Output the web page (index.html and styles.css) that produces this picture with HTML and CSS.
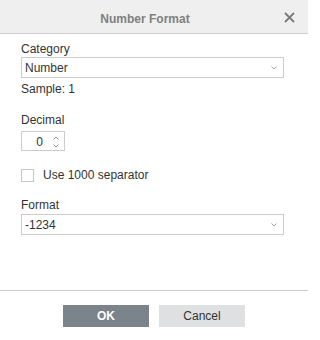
FILE: index.html
```html
<!DOCTYPE html>
<html>
<head>
<meta charset="utf-8">
<link rel="stylesheet" href="styles.css">
</head>
<body>
<div class="dialog">
  <div class="header">
    <span class="title">Number Format</span>
    <svg class="close" width="11" height="11" viewBox="0 0 11 11"><path d="M1 1 L10 10 M10 1 L1 10" stroke="#7a7a7a" stroke-width="1.8" fill="none"/></svg>
  </div>
  <div class="content">
    <div class="label label-category">Category</div>
    <div class="select">
      <span>Number</span>
      <svg class="caret" width="6" height="4" viewBox="0 0 6 4"><path d="M0.5 0.5 L3 3 L5.5 0.5" stroke="#9a9a9a" stroke-width="0.9" fill="none"/></svg>
    </div>
    <div class="sample">Sample: 1</div>
    <div class="label label-decimal">Decimal</div>
    <div class="spinner">
      <span class="value">0</span>
      <div class="arrows">
        <svg width="6" height="4" viewBox="0 0 6 4"><path d="M0.5 3.5 L3 1 L5.5 3.5" stroke="#8a8a8a" stroke-width="0.9" fill="none"/></svg>
        <svg width="6" height="4" viewBox="0 0 6 4"><path d="M0.5 0.5 L3 3 L5.5 0.5" stroke="#8a8a8a" stroke-width="0.9" fill="none"/></svg>
      </div>
    </div>
    <div class="check-row">
      <span class="checkbox"></span>
      <span class="check-label">Use 1000 separator</span>
    </div>
    <div class="label label-format">Format</div>
    <div class="select">
      <span>-1234</span>
      <svg class="caret" width="6" height="4" viewBox="0 0 6 4"><path d="M0.5 0.5 L3 3 L5.5 0.5" stroke="#9a9a9a" stroke-width="0.9" fill="none"/></svg>
    </div>
  </div>
  <div class="footer">
    <button class="btn btn-ok">OK</button>
    <button class="btn btn-cancel">Cancel</button>
  </div>
</div>
</body>
</html>
```
FILE: styles.css
```css
html, body {
  margin: 0;
  padding: 0;
  background: #ffffff;
}
body {
  font-family: "Liberation Sans", Arial, sans-serif;
  font-size: 12px;
  color: #333333;
}
.dialog {
  width: 308px;
  height: 340px;
  display: flex;
  flex-direction: column;
  background: #ffffff;
}
.header {
  height: 33px;
  background: #efefef;
  border-bottom: 1px solid #cfcfcf;
  display: flex;
  align-items: center;
  justify-content: center;
  position: relative;
  box-sizing: content-box;
  padding-right: 18px;
}
.title {
  font-weight: bold;
  font-size: 12px;
  color: #808080;
  padding-top: 5px;
}
.close {
  position: absolute;
  right: 13px;
  top: 12px;
}
.content {
  padding: 9px 24px 0 21px;
  flex: 1;
  display: flex;
  flex-direction: column;
}
.label {
  line-height: 13px;
  height: 13px;
}
.label-category {
  margin-bottom: 1px;
}
.label-decimal {
  margin-top: 18px;
  margin-bottom: 4px;
}
.label-format {
  margin-top: 17px;
  margin-bottom: 2px;
}
.select {
  height: 21px;
  border: 1px solid #cccccc;
  box-sizing: border-box;
  display: flex;
  align-items: center;
  justify-content: space-between;
  padding: 0 6px 0 3px;
  color: #333333;
}
.caret {
  margin-top: 1px;
}
.sample {
  line-height: 13px;
  margin-top: 5px;
}
.spinner {
  width: 44px;
  height: 20px;
  border: 1px solid #cccccc;
  box-sizing: border-box;
  display: flex;
  align-items: center;
  justify-content: flex-end;
  padding-right: 5px;
}
.value {
  margin-right: 10px;
  padding-top: 2px;
}
.arrows {
  display: flex;
  flex-direction: column;
  gap: 4px;
  padding-top: 1px;
}
.arrows svg {
  display: block;
}
.check-row {
  display: flex;
  align-items: center;
  margin-top: 18px;
  height: 13px;
}
.checkbox {
  width: 13px;
  height: 13px;
  border: 1px solid #c8c8c8;
  box-sizing: border-box;
  background: #ffffff;
}
.check-label {
  margin-left: 9px;
  line-height: 13px;
}
.footer {
  height: 50px;
  border-top: 1px solid #cccccc;
  display: flex;
  justify-content: center;
  gap: 10px;
  padding-top: 14px;
  box-sizing: border-box;
}
.btn {
  width: 86px;
  height: 22px;
  border: none;
  font-family: "Liberation Sans", Arial, sans-serif;
  font-size: 12px;
  padding: 0;
  margin: 0;
}
.btn-ok {
  background: #7b838b;
  color: #ffffff;
  font-weight: bold;
}
.btn-cancel {
  background: #dfe0e1;
  color: #333333;
}
```
